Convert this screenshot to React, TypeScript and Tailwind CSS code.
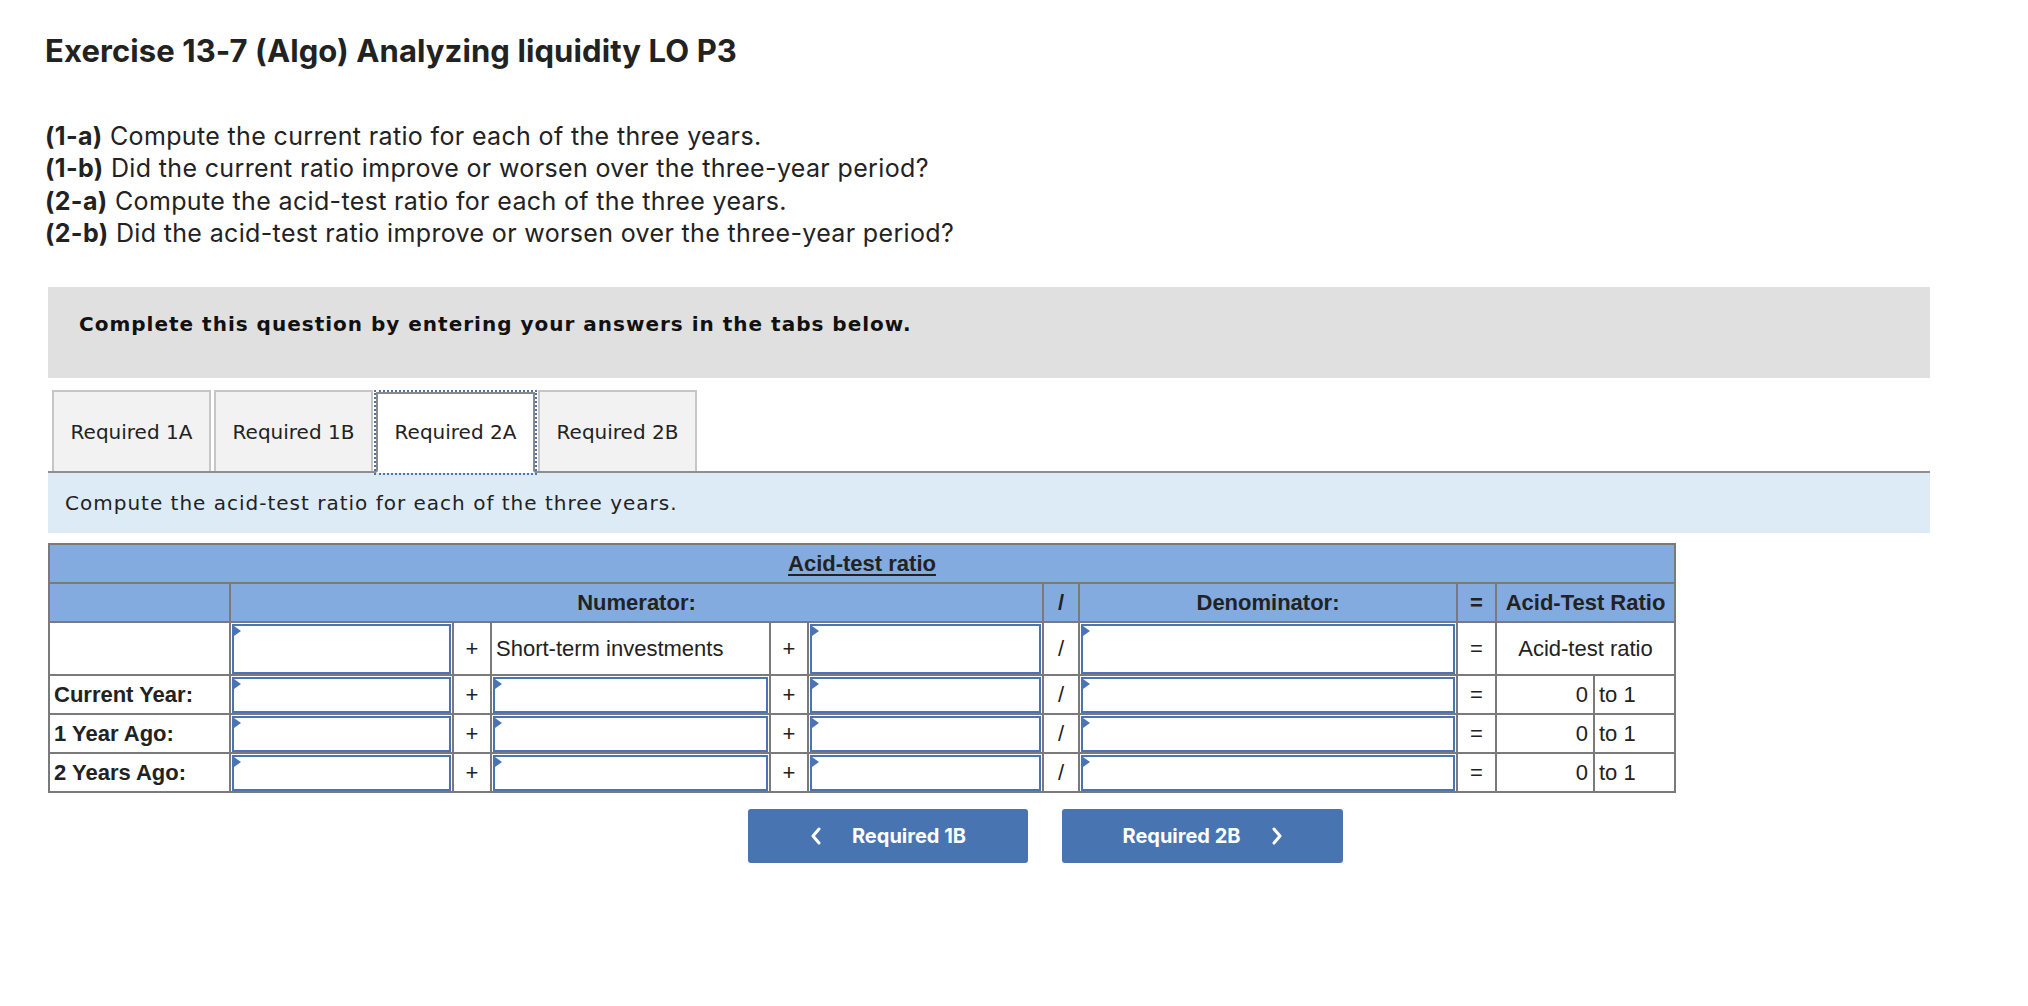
import React from 'react'

const tabs = ['Required 1A', 'Required 1B', 'Required 2A', 'Required 2B']

const questions = [
  { tag: '(1-a)', text: 'Compute the current ratio for each of the three years.' },
  { tag: '(1-b)', text: 'Did the current ratio improve or worsen over the three-year period?' },
  { tag: '(2-a)', text: 'Compute the acid-test ratio for each of the three years.' },
  { tag: '(2-b)', text: 'Did the acid-test ratio improve or worsen over the three-year period?' },
]

const years = ['Current Year:', '1 Year Ago:', '2 Years Ago:']

// blue-bordered answer box with the little marker in the corner
const Input = ({ tall }: { tall?: boolean }) => (
  <div className={`relative mx-[1px] border-2 border-[#4a74b4] bg-white ${tall ? 'h-[50px]' : 'h-[36px]'}`}>
    <span className="absolute left-0 top-0 h-0 w-0 border-y-[5px] border-l-[7px] border-y-transparent border-l-[#4a74b4]" />
  </div>
)

const cell = 'border-2 border-[#7a7a7a] p-0'
const head = 'border-2 border-[#7a7a7a] bg-[#83abe0] font-bold text-center'

export default function App() {
  return (
    <div className="min-h-screen bg-white pl-[48px] pt-[27px] text-[#222]" style={{ width: 2028 }}>
      {/* Title */}
      <h1 className="-ml-[3px] font-['Inter',sans-serif] text-[31px] font-bold leading-[48px] tracking-[0.1px]">
        Exercise 13-7 (Algo) Analyzing liquidity LO P3
      </h1>

      {/* Questions */}
      <div className="-ml-[3px] mt-[45px] font-['Inter',sans-serif] text-[25px] leading-[32.3px] tracking-[0.35px]">
        {questions.map((q) => (
          <p key={q.tag}>
            <span className="font-bold">{q.tag}</span> {q.text}
          </p>
        ))}
      </div>

      <div className="mt-[38px] w-[1882px] font-['DejaVu_Sans',sans-serif]">
        {/* Instructions banner */}
        <div className="h-[91px] bg-[#e0e0e0] pl-[31px] pt-[21px] text-[20px] font-bold leading-[32px] tracking-[1px] text-[#111]">
          Complete this question by entering your answers in the tabs below.
        </div>

        {/* Tabs */}
        <div className="mt-[12px] flex items-end gap-[3px] border-b-2 border-[#8f8f8f] pl-[4px]">
          {tabs.map((t) => {
            const active = t === 'Required 2A'
            return (
              <div
                key={t}
                className={`-mb-[2px] flex h-[81px] w-[159px] items-center justify-center border-2 text-[20px] ${
                  active
                    ? 'border-[#8a8a8a] border-b-white bg-white pb-[2px] outline-2 outline-dotted outline-[#4a74b4]'
                    : 'mb-0 h-[79px] border-b-0 border-[#c6c6c6] bg-[#f2f2f2]'
                }`}
              >
                {t}
              </div>
            )
          })}
        </div>

        {/* Sub instructions */}
        <div className="flex h-[60px] items-center bg-[#ddebf7] pl-[17px] text-[20px] tracking-[1px]">
          Compute the acid-test ratio for each of the three years.
        </div>
      </div>

      {/* Ratio table */}
      <table className="mt-[10px] table-fixed border-collapse font-['Liberation_Sans',Arial,sans-serif] text-[22px] text-[#222]">
        <colgroup>
          <col className="w-[181px]" />
          <col className="w-[223px]" />
          <col className="w-[38px]" />
          <col className="w-[279px]" />
          <col className="w-[38px]" />
          <col className="w-[235px]" />
          <col className="w-[36px]" />
          <col className="w-[378px]" />
          <col className="w-[39px]" />
          <col className="w-[98px]" />
          <col className="w-[81px]" />
        </colgroup>
        <tbody>
          <tr className="h-[39px]">
            <td colSpan={11} className={head}>
              <span className="underline underline-offset-[3px]">Acid-test ratio</span>
            </td>
          </tr>
          <tr className="h-[39px]">
            <td className={head} />
            <td colSpan={5} className={head}>Numerator:</td>
            <td className={head}>/</td>
            <td className={head}>Denominator:</td>
            <td className={head}>=</td>
            <td colSpan={2} className={head}>Acid-Test Ratio</td>
          </tr>
          <tr className="h-[53px]">
            <td className={cell} />
            <td className={cell}><Input tall /></td>
            <td className={`${cell} text-center`}>+</td>
            <td className={`${cell} pl-[4px]`}>Short-term investments</td>
            <td className={`${cell} text-center`}>+</td>
            <td className={cell}><Input tall /></td>
            <td className={`${cell} text-center`}>/</td>
            <td className={cell}><Input tall /></td>
            <td className={`${cell} text-center`}>=</td>
            <td colSpan={2} className={`${cell} text-center`}>Acid-test ratio</td>
          </tr>
          {years.map((y) => (
            <tr key={y} className="h-[39px]">
              <td className={`${cell} pl-[4px] font-bold`}>{y}</td>
              <td className={cell}><Input /></td>
              <td className={`${cell} text-center`}>+</td>
              <td className={cell}><Input /></td>
              <td className={`${cell} text-center`}>+</td>
              <td className={cell}><Input /></td>
              <td className={`${cell} text-center`}>/</td>
              <td className={cell}><Input /></td>
              <td className={`${cell} text-center`}>=</td>
              <td className={`${cell} pr-[5px] text-right`}>0</td>
              <td className={`${cell} pl-[4px]`}>to 1</td>
            </tr>
          ))}
        </tbody>
      </table>

      {/* Navigation */}
      <div className="mt-[16px] flex gap-[34px] pl-[700px] font-['Inter',sans-serif] text-[20px] font-bold text-white">
        <button className="flex h-[54px] w-[280px] items-center justify-center gap-[30px] rounded-[3px] bg-[#4874b2]">
          <svg width="12" height="18" viewBox="0 0 12 18" fill="none" stroke="white" strokeWidth="3" strokeLinecap="round" strokeLinejoin="round">
            <polyline points="9,2 3,9 9,16" />
          </svg>
          Required 1B
        </button>
        <button className="flex h-[54px] w-[281px] items-center justify-center gap-[30px] rounded-[3px] bg-[#4874b2]">
          Required 2B
          <svg width="12" height="18" viewBox="0 0 12 18" fill="none" stroke="white" strokeWidth="3" strokeLinecap="round" strokeLinejoin="round">
            <polyline points="3,2 9,9 3,16" />
          </svg>
        </button>
      </div>
    </div>
  )
}
